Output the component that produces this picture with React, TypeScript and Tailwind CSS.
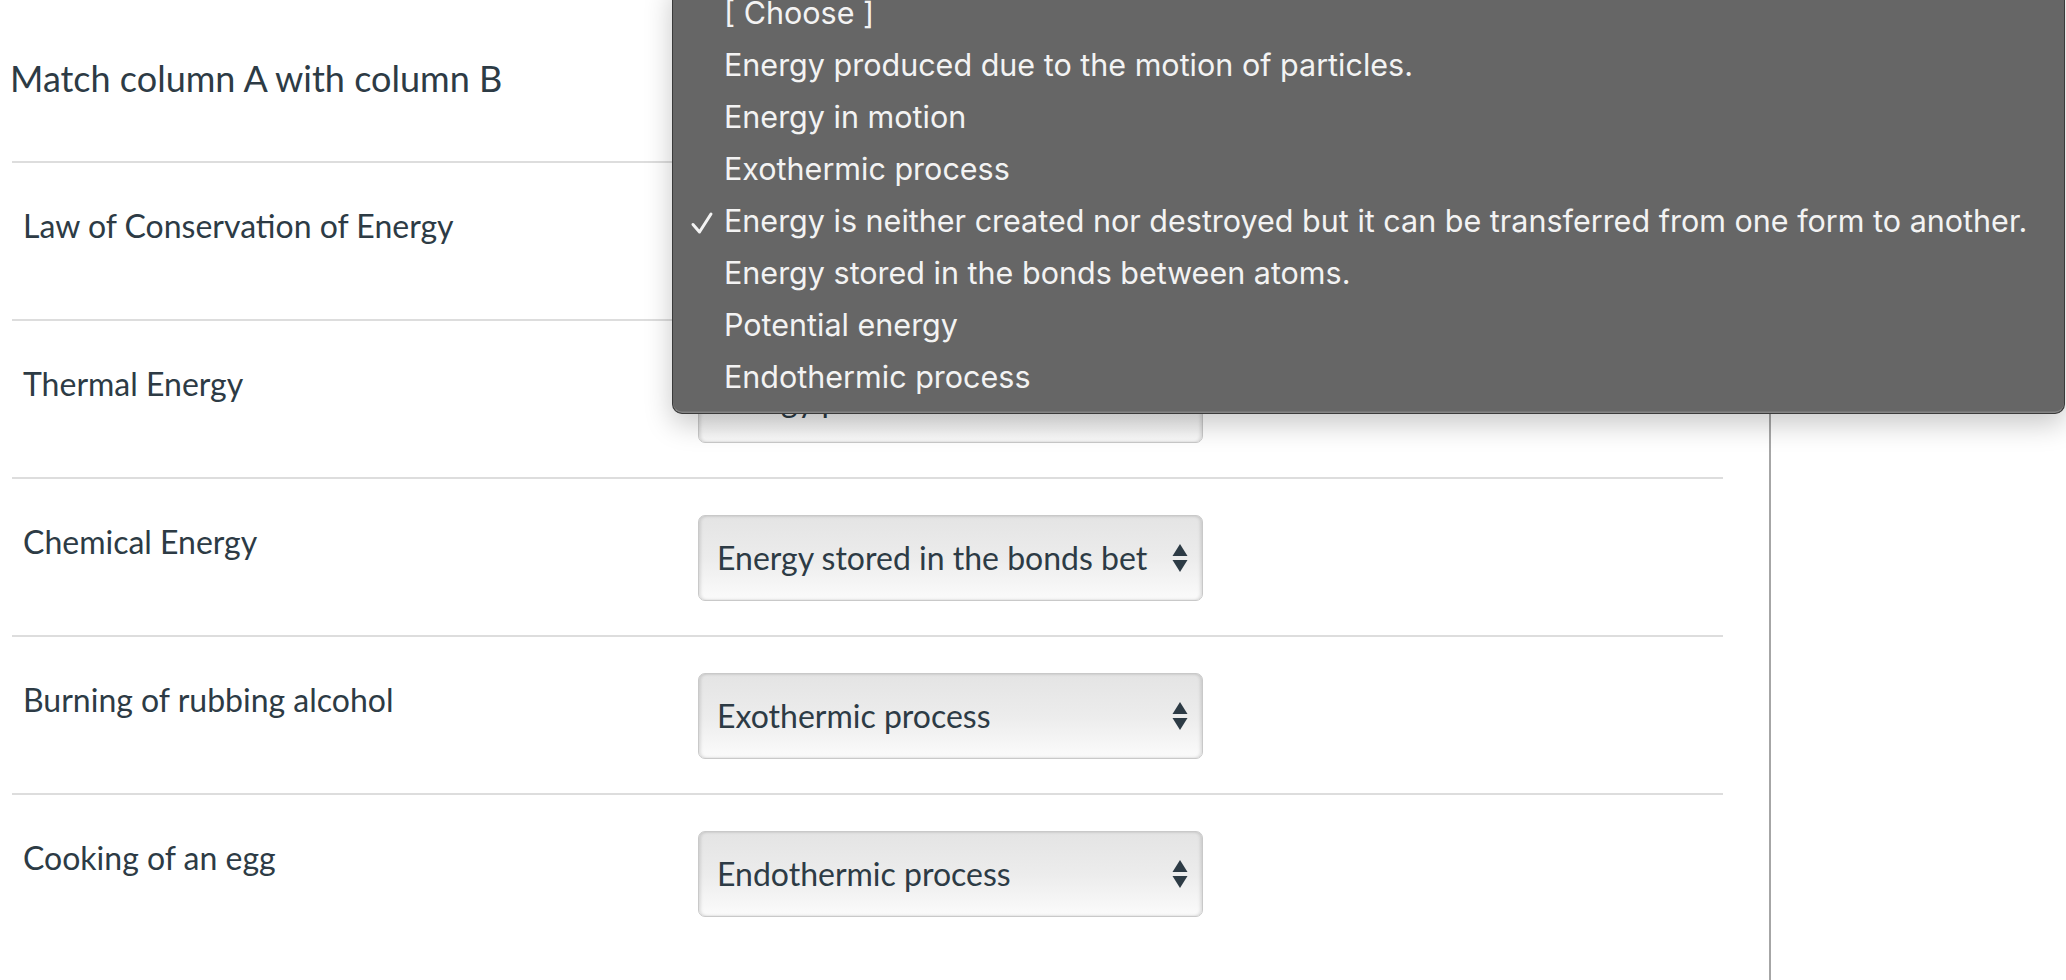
import React from 'react';

const rows = [
  { label: 'Law of Conservation of Energy', value: 'Energy is neither created nor destroyed but it can be transferred from one form to another.' },
  { label: 'Thermal Energy', value: 'Energy produced due to the motion of particles.' },
  { label: 'Chemical Energy', value: 'Energy stored in the bonds between atoms.' },
  { label: 'Burning of rubbing alcohol', value: 'Exothermic process' },
  { label: 'Cooking of an egg', value: 'Endothermic process' },
];

const options = [
  '[ Choose ]',
  'Energy produced due to the motion of particles.',
  'Energy in motion',
  'Exothermic process',
  'Energy is neither created nor destroyed but it can be transferred from one form to another.',
  'Energy stored in the bonds between atoms.',
  'Potential energy',
  'Endothermic process',
];

const SELECTED = 4;

const Arrows = () => (
  <svg width="16" height="30" viewBox="0 0 16 30" className="shrink-0">
    <path d="M8 1 L15.5 13 L0.5 13 Z" fill="#2d3b45" />
    <path d="M0.5 17 L15.5 17 L8 29 Z" fill="#2d3b45" />
  </svg>
);

const Check = () => (
  <svg width="24" height="24" viewBox="0 0 24 24">
    <path d="M3 13.5 L9.5 21 L21 3" fill="none" stroke="#f3f3f3" strokeWidth="3" strokeLinecap="round" strokeLinejoin="round" />
  </svg>
);

const FakeSelect = ({ value }: { value: string }) => (
  <div className="flex h-[86px] w-[505px] items-center rounded-[7px] border-[1.5px] border-[#c9c9c9] bg-gradient-to-b from-[#e4e4e4] via-[#ececec] to-[#fbfbfb] pl-[18px] pr-[14px] shadow-[inset_2px_0_3px_rgba(0,0,0,0.1),inset_-2px_0_3px_rgba(0,0,0,0.1)]">
    <span className="w-[431px] overflow-hidden whitespace-nowrap text-[32px] leading-[38px] text-[#2d3b45]">
      {value}
    </span>
    <span className="ml-auto">
      <Arrows />
    </span>
  </div>
);

export default function App() {
  return (
    <div
      className="relative flex h-[980px] w-full overflow-hidden bg-white"
      style={{ fontFamily: 'Lato, "Noto Sans", sans-serif' }}
    >
      {/* question body */}
      <div className="ml-[12px] w-[1711px] shrink-0">
        <div className="h-[163px] border-b-2 border-[#dddddd] pt-[57px]">
          <h2 className="-ml-[2px] text-[36px] leading-[43px] text-[#2d3b45]">Match column A with column B</h2>
        </div>
        {rows.map((row, i) => (
          <div
            key={row.label}
            className={`flex h-[158px] ${i < rows.length - 1 ? 'border-b-2 border-[#dddddd]' : ''}`}
          >
            <div className="w-[686px] shrink-0 pl-[11px] pt-[44px] text-[32px] leading-[38px] text-[#2d3b45]">
              {row.label}
            </div>
            <div className="pt-[36px]">
              <FakeSelect value={row.value} />
            </div>
          </div>
        ))}
      </div>

      {/* side column */}
      <div className="ml-[46px] h-full border-l-2 border-[#a6a6a6]" />

      {/* open select menu */}
      <div
        className="absolute left-[672px] top-[-18px] w-[1393px] rounded-b-[10px] border-x border-b-[1.5px] border-[#3a3a3a] bg-[#666666] pb-[10px] pt-[5px] shadow-[inset_0_-1.5px_0_#848484,0_10px_28px_rgba(0,0,0,0.22)]"
        style={{ fontFamily: 'Inter, "Noto Sans", sans-serif' }}
      >
        {options.map((opt, i) => (
          <div key={opt} className="flex h-[52px] items-center text-[30.5px] text-[#f3f3f3]">
            <span className="flex w-[51px] shrink-0 pl-[17px] pt-[4px]">
              {i === SELECTED ? <Check /> : null}
            </span>
            <span className="whitespace-nowrap">{opt}</span>
          </div>
        ))}
      </div>
    </div>
  );
}
